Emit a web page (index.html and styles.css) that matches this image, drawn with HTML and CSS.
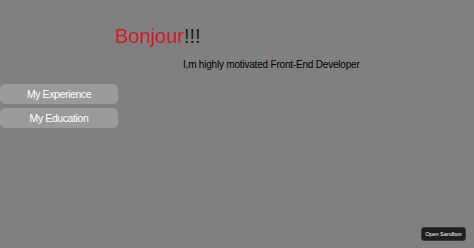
FILE: index.html
```html
<!DOCTYPE html>
<html>
<head>
<meta charset="utf-8">
<link rel="stylesheet" href="styles.css">
</head>
<body>
<header class="hero">
  <h1 class="greeting"><span class="hello">Bonjour</span>!!!</h1>
  <p class="tagline">I,m highly motivated Front-End Developer</p>
</header>
<nav class="menu">
  <button class="menu-btn">My Experience</button>
  <button class="menu-btn">My Education</button>
</nav>
<button class="sandbox">Open Sandbox</button>
</body>
</html>
```
FILE: styles.css
```css
html, body {
  margin: 0;
  padding: 0;
  height: 100%;
}
body {
  background: #808080;
  font-family: "Liberation Sans", Arial, sans-serif;
  position: relative;
}
.hero {
  padding-top: 24px;
}
.greeting {
  margin: 0 0 0 115px;
  font-size: 20px;
  font-weight: normal;
  line-height: 24px;
  color: #1c1c1c;
}
.hello {
  color: #d4182c;
}
.tagline {
  margin: 10px 0 0 183px;
  font-size: 10px;
  letter-spacing: -0.2px;
  line-height: 14px;
  color: #000;
}
.menu {
  margin-top: 12px;
  display: flex;
  flex-direction: column;
  gap: 4px;
  width: 118px;
}
.menu-btn {
  height: 20px;
  border: none;
  border-radius: 5px;
  background: #9a9a9a;
  color: #fff;
  font-family: "Liberation Sans", Arial, sans-serif;
  font-size: 10.5px;
  letter-spacing: -0.4px;
  padding: 0;
}
.sandbox {
  position: absolute;
  right: 8px;
  bottom: 7px;
  background: #1e1e1e;
  color: #fff;
  border: 1px solid #3a3a3a;
  border-radius: 3px;
  font-family: "Liberation Sans", Arial, sans-serif;
  font-size: 5.5px;
  white-space: nowrap;
  padding: 0;
  height: 14px;
  width: 45px;
}
```
